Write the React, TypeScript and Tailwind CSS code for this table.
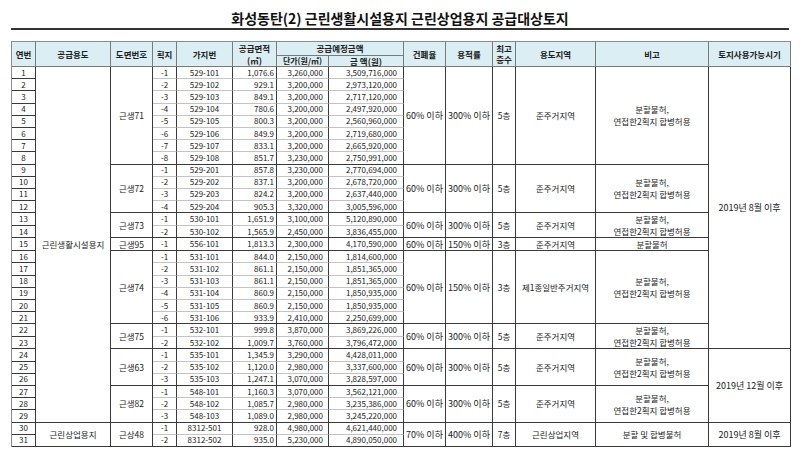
type Lot = [string, string, string, string, string];

type Group = {
  code: string;
  lots: Lot[];
  bcr: string;
  far: string;
  floors: string;
  zone: string;
  note: string[];
};

const NOTE2 = ["분할불허,", "연접한2획지 합병허용"];

const groups: Group[] = [
  {
    code: "근생71",
    lots: [
      ["-1", "529-101", "1,076.6", "3,260,000", "3,509,716,000"],
      ["-2", "529-102", "929.1", "3,200,000", "2,973,120,000"],
      ["-3", "529-103", "849.1", "3,200,000", "2,717,120,000"],
      ["-4", "529-104", "780.6", "3,200,000", "2,497,920,000"],
      ["-5", "529-105", "800.3", "3,200,000", "2,560,960,000"],
      ["-6", "529-106", "849.9", "3,200,000", "2,719,680,000"],
      ["-7", "529-107", "833.1", "3,200,000", "2,665,920,000"],
      ["-8", "529-108", "851.7", "3,230,000", "2,750,991,000"],
    ],
    bcr: "60% 이하",
    far: "300% 이하",
    floors: "5층",
    zone: "준주거지역",
    note: NOTE2,
  },
  {
    code: "근생72",
    lots: [
      ["-1", "529-201", "857.8", "3,230,000", "2,770,694,000"],
      ["-2", "529-202", "837.1", "3,200,000", "2,678,720,000"],
      ["-3", "529-203", "824.2", "3,200,000", "2,637,440,000"],
      ["-4", "529-204", "905.3", "3,320,000", "3,005,596,000"],
    ],
    bcr: "60% 이하",
    far: "300% 이하",
    floors: "5층",
    zone: "준주거지역",
    note: NOTE2,
  },
  {
    code: "근생73",
    lots: [
      ["-1", "530-101", "1,651.9", "3,100,000", "5,120,890,000"],
      ["-2", "530-102", "1,565.9", "2,450,000", "3,836,455,000"],
    ],
    bcr: "60% 이하",
    far: "300% 이하",
    floors: "5층",
    zone: "준주거지역",
    note: NOTE2,
  },
  {
    code: "근생95",
    lots: [["-1", "556-101", "1,813.3", "2,300,000", "4,170,590,000"]],
    bcr: "60% 이하",
    far: "150% 이하",
    floors: "3층",
    zone: "준주거지역",
    note: ["분할불허"],
  },
  {
    code: "근생74",
    lots: [
      ["-1", "531-101", "844.0", "2,150,000", "1,814,600,000"],
      ["-2", "531-102", "861.1", "2,150,000", "1,851,365,000"],
      ["-3", "531-103", "861.1", "2,150,000", "1,851,365,000"],
      ["-4", "531-104", "860.9", "2,150,000", "1,850,935,000"],
      ["-5", "531-105", "860.9", "2,150,000", "1,850,935,000"],
      ["-6", "531-106", "933.9", "2,410,000", "2,250,699,000"],
    ],
    bcr: "60% 이하",
    far: "150% 이하",
    floors: "3층",
    zone: "제1종일반주거지역",
    note: NOTE2,
  },
  {
    code: "근생75",
    lots: [
      ["-1", "532-101", "999.8", "3,870,000", "3,869,226,000"],
      ["-2", "532-102", "1,009.7", "3,760,000", "3,796,472,000"],
    ],
    bcr: "60% 이하",
    far: "300% 이하",
    floors: "5층",
    zone: "준주거지역",
    note: NOTE2,
  },
  {
    code: "근생63",
    lots: [
      ["-1", "535-101", "1,345.9", "3,290,000", "4,428,011,000"],
      ["-2", "535-102", "1,120.0", "2,980,000", "3,337,600,000"],
      ["-3", "535-103", "1,247.1", "3,070,000", "3,828,597,000"],
    ],
    bcr: "60% 이하",
    far: "300% 이하",
    floors: "5층",
    zone: "준주거지역",
    note: NOTE2,
  },
  {
    code: "근생82",
    lots: [
      ["-1", "548-101", "1,160.3", "3,070,000", "3,562,121,000"],
      ["-2", "548-102", "1,085.7", "2,980,000", "3,235,386,000"],
      ["-3", "548-103", "1,089.0", "2,980,000", "3,245,220,000"],
    ],
    bcr: "60% 이하",
    far: "300% 이하",
    floors: "5층",
    zone: "준주거지역",
    note: NOTE2,
  },
  {
    code: "근상48",
    lots: [
      ["-1", "8312-501", "928.0", "4,980,000", "4,621,440,000"],
      ["-2", "8312-502", "935.0", "5,230,000", "4,890,050,000"],
    ],
    bcr: "70% 이하",
    far: "400% 이하",
    floors: "7층",
    zone: "근린상업지역",
    note: ["분할 및 합병불허"],
  },
];

// rows where the merged 공급용도 / 시기 cells start
const useSpans: Record<number, [string, number]> = {
  1: ["근린생활시설용지", 29],
  30: ["근린상업용지", 2],
};
const dateSpans: Record<number, [string, number]> = {
  1: ["2019년 8월 이후", 23],
  24: ["2019년 12월 이후", 6],
  30: ["2019년 8월 이후", 2],
};

const dk = "border-r border-b border-r-[#3a3a3a] border-b-[#3a3a3a]";
const lt = "border-r border-b border-r-[#3a3a3a] border-b-[#c4c4c4]";
const hd = "border-r border-b border-[#7a7a7a] bg-[#dbeef4] font-bold text-center align-middle text-[8.5px]";
const ko = "text-center align-middle text-[8.5px]";
const kw = "text-center align-middle text-[9px]";

export default function App() {
  let no = 0;
  const rows: JSX.Element[] = [];

  groups.forEach((g) => {
    g.lots.forEach((lot, i) => {
      no += 1;
      const last = i === g.lots.length - 1;
      const line = last ? dk : lt;
      const use = useSpans[no];
      const date = dateSpans[no];
      const span = g.lots.length;
      rows.push(
        <tr key={no} className="h-[12.2px]">
          <td className={`${dk} text-center`}>{no}</td>
          {use && (
            <td rowSpan={use[1]} className={`${dk} ${ko}`}>
              {use[0]}
            </td>
          )}
          {i === 0 && (
            <td rowSpan={span} className={`${dk} ${ko}`}>
              {g.code}
            </td>
          )}
          <td className={`${line} text-center`}>{lot[0]}</td>
          <td className={`${line} text-center`}>{lot[1]}</td>
          <td className={`${line} text-right pr-[2px]`}>{lot[2]}</td>
          <td className={`${line} text-right pr-[5px]`}>{lot[3]}</td>
          <td className={`${line} text-right pr-[6px]`}>{lot[4]}</td>
          {i === 0 && (
            <>
              <td rowSpan={span} className={`${dk} ${kw}`}>
                {g.bcr}
              </td>
              <td rowSpan={span} className={`${dk} ${kw}`}>
                {g.far}
              </td>
              <td rowSpan={span} className={`${dk} ${ko}`}>
                {g.floors}
              </td>
              <td rowSpan={span} className={`${dk} ${ko}`}>
                {g.zone}
              </td>
              <td rowSpan={span} className={`${dk} ${ko} leading-[12px]`}>
                {g.note.map((t) => (
                  <div key={t}>{t}</div>
                ))}
              </td>
            </>
          )}
          {date && (
            <td rowSpan={date[1]} className={`${dk} ${kw}`}>
              {date[0]}
            </td>
          )}
        </tr>
      );
    });
  });

  return (
    <div
      className="w-[800px] h-[451px] bg-white text-[#222] overflow-hidden"
      style={{ fontFamily: '"Noto Sans CJK KR", "Noto Sans", sans-serif' }}
    >
      <div className="pt-[8px] text-center text-[14px] leading-[20px] font-bold text-[#111]">
        화성동탄(2) 근린생활시설용지 근린상업용지 공급대상토지
      </div>
      <div className="mx-[11px] h-[2px] bg-[#333]" />
      <div className="mt-[11px] ml-[11px]">
        <table className="w-[779px] table-fixed border-separate border-spacing-0 border-t border-l border-[#8c8c8c] text-[8px] leading-none">
          <colgroup>
            <col className="w-[24px]" />
            <col className="w-[75px]" />
            <col className="w-[42px]" />
            <col className="w-[24px]" />
            <col className="w-[56px]" />
            <col className="w-[44px]" />
            <col className="w-[52px]" />
            <col className="w-[75px]" />
            <col className="w-[42px]" />
            <col className="w-[47px]" />
            <col className="w-[23px]" />
            <col className="w-[80px]" />
            <col className="w-[113px]" />
            <col className="w-[82px]" />
          </colgroup>
          <thead>
            <tr className="h-[13px]">
              <th rowSpan={2} className={hd}>연번</th>
              <th rowSpan={2} className={hd}>공급용도</th>
              <th rowSpan={2} className={hd}>도면번호</th>
              <th rowSpan={2} className={hd}>획지</th>
              <th rowSpan={2} className={hd}>가지번</th>
              <th rowSpan={2} className={`${hd} leading-[12px]`}>
                <div>공급면적</div>
                <div>(㎡)</div>
              </th>
              <th colSpan={2} className={hd}>공급예정금액</th>
              <th rowSpan={2} className={hd}>건폐율</th>
              <th rowSpan={2} className={hd}>용적률</th>
              <th rowSpan={2} className={`${hd} leading-[11px]`}>
                <div>최고</div>
                <div>층수</div>
              </th>
              <th rowSpan={2} className={hd}>용도지역</th>
              <th rowSpan={2} className={hd}>비고</th>
              <th rowSpan={2} className={hd}>토지사용가능시기</th>
            </tr>
            <tr className="h-[11px]">
              <th className={`${hd} text-[8px]`}>단가(원/㎡)</th>
              <th className={hd}>금 액(원)</th>
            </tr>
          </thead>
          <tbody className="font-normal">{rows}</tbody>
        </table>
      </div>
    </div>
  );
}
